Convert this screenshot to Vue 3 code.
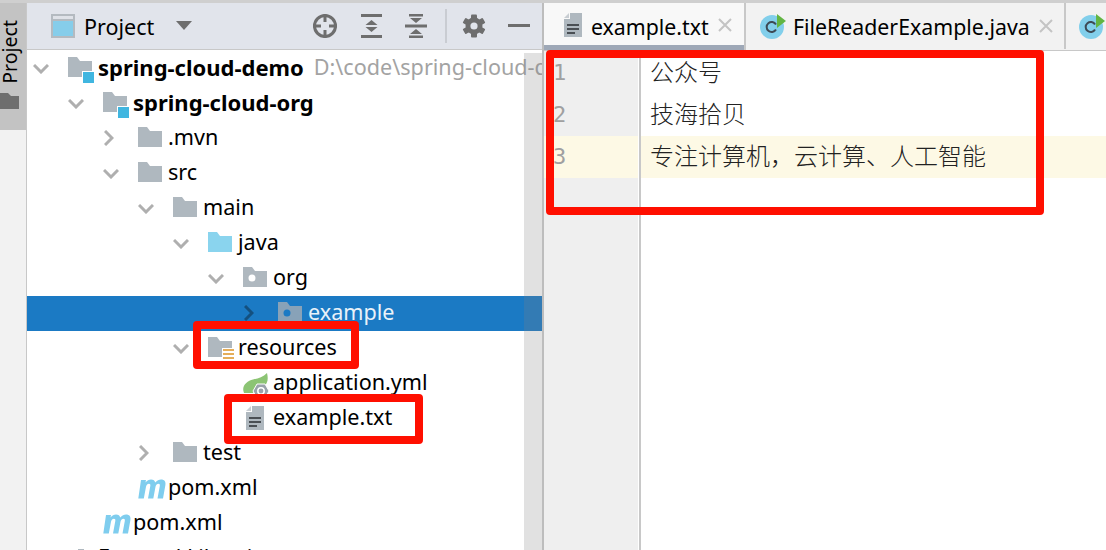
<script setup>
const rows = [
  { d: 0, c: 'down', i: 'module', t: 'spring-cloud-demo', bold: true, hint: 'D:\\code\\spring-cloud-demo' },
  { d: 1, c: 'down', i: 'module', t: 'spring-cloud-org', bold: true },
  { d: 2, c: 'right', i: 'folder', t: '.mvn' },
  { d: 2, c: 'down', i: 'folder', t: 'src' },
  { d: 3, c: 'down', i: 'folder', t: 'main' },
  { d: 4, c: 'down', i: 'source', t: 'java' },
  { d: 5, c: 'down', i: 'package', t: 'org' },
  { d: 6, c: 'right', i: 'package', t: 'example', selected: true },
  { d: 4, c: 'down', i: 'resources', t: 'resources' },
  { d: 5, c: '', i: 'spring', t: 'application.yml' },
  { d: 5, c: '', i: 'text', t: 'example.txt' },
  { d: 3, c: 'right', i: 'folder', t: 'test' },
  { d: 2, c: '', i: 'maven', t: 'pom.xml' },
  { d: 1, c: '', i: 'maven', t: 'pom.xml' },
  { d: 0, c: 'right', i: 'library', t: 'External Libraries' },
]
const lines = ['公众号', '技海拾贝', '专注计算机，云计算、人工智能']
const indent = (d) => ({ paddingLeft: 6 + 35 * d + 'px' })
</script>

<template>
  <div class="app">
    <aside class="strip">
      <div class="strip-btn">
        <span class="strip-label">Project</span>
        <svg class="strip-folder" width="19" height="16" viewBox="0 0 19 16"><path d="M-2 0H8l3 3h8v13H-2z" fill="#6e6e6e"/></svg>
      </div>
    </aside>

    <section class="panel">
      <header class="panel-head">
        <svg class="win" width="24" height="24" viewBox="0 0 24 24"><rect width="24" height="24" fill="#b4bac0"/><rect x="2" y="7" width="20" height="15" fill="#86cdea"/><rect x="2" y="2" width="20" height="3" fill="#dfe2e8"/></svg>
        <span class="panel-title">Project</span>
        <svg class="drop" width="16" height="9" viewBox="0 0 16 9"><path d="M0 0h16L8 9z" fill="#6e6e6e"/></svg>
        <svg class="act locate" width="26" height="26" viewBox="0 0 26 26" fill="none" stroke="#6e6e6e" stroke-width="3"><circle cx="13" cy="13" r="10.5"/><path d="M13 1v8M13 17v8M1 13h8M17 13h8"/></svg>
        <svg class="act expand" width="24" height="26" viewBox="0 0 24 26" fill="#6e6e6e"><rect x="1" y="1" width="21" height="3"/><rect x="1" y="22" width="21" height="3"/><path d="M11.5 7l6 5h-12zM11.5 19l-6-5h12z"/></svg>
        <svg class="act collapse" width="24" height="26" viewBox="0 0 24 26" fill="#6e6e6e"><rect x="1" y="11.5" width="22" height="3"/><rect x="5" y="1" width="14" height="2.5"/><rect x="5" y="22.5" width="14" height="2.5"/><path d="M12 10l-6-5h12zM12 16l6 5H6z"/></svg>
        <span class="sep"></span>
        <svg class="act gear" width="24" height="24" viewBox="0 0 24 24"><g fill="#6e6e6e"><rect x="9" y="0.5" width="6" height="23" rx="1"/><rect x="9" y="0.5" width="6" height="23" rx="1" transform="rotate(60 12 12)"/><rect x="9" y="0.5" width="6" height="23" rx="1" transform="rotate(120 12 12)"/><circle cx="12" cy="12" r="8.5"/></g><circle cx="12" cy="12" r="3.6" fill="#e1e4eb"/></svg>
        <span class="minus"></span>
      </header>

      <div class="tree">
        <div v-for="r in rows" :key="r.t + r.d" class="row" :class="{ selected: r.selected }" :style="indent(r.d)">
          <span class="chev">
            <svg v-if="r.c === 'down'" width="16" height="10" viewBox="0 0 16 10" fill="none" stroke="#afafaf" stroke-width="3"><path d="M1 1l7 7 7-7"/></svg>
            <svg v-else-if="r.c === 'right'" class="chev-right" width="10" height="16" viewBox="0 0 10 16" fill="none" stroke-width="3"><path d="M1 1l7 7-7 7"/></svg>
          </span>
          <span class="ico">
            <svg v-if="r.i === 'folder'" class="lift" width="24" height="20" viewBox="0 0 24 20"><path d="M0 0h9l3 4h12v16H0z" fill="#afb8bf"/></svg>
            <svg v-else-if="r.i === 'module'" class="mod" width="26" height="26" viewBox="0 0 26 26"><path d="M0 0h9l3 4h12v16H0z" fill="#afb8bf"/><rect x="14" y="14" width="12" height="12" fill="#fff"/><rect x="15" y="15" width="11" height="11" fill="#40b6e0"/></svg>
            <svg v-else-if="r.i === 'source'" class="lift" width="24" height="20" viewBox="0 0 24 20"><path d="M0 0h9l3 4h12v16H0z" fill="#8ad4ee"/></svg>
            <svg v-else-if="r.i === 'package'" class="lift" width="24" height="20" viewBox="0 0 24 20"><path class="pkg-f" d="M0 0h9l3 4h12v16H0z"/><circle class="pkg-d" cx="9" cy="11" r="3.500"/></svg>
            <svg v-else-if="r.i === 'resources'" width="27" height="24" viewBox="0 0 27 24"><path d="M0 0h9l3 4h12v16H0z" fill="#afb8bf"/><rect x="14" y="11" width="13" height="13" fill="#fff"/><path d="M15 12h11v2H15zM15 16h11v2H15zM15 20h11v2H15z" fill="#e5ae5a"/></svg>
            <svg v-else-if="r.i === 'spring'" class="spr" width="27" height="26" viewBox="0 0 27 26"><path d="M1 20C-2 13 4 8 10 6.500 15 5.500 20 4 24 0c1.500 6 .5 10-2 12H14l-4 8z" fill="#8cc474"/><path d="M10 18l4-7h8l4 7-4 7h-8z" fill="#9aa3ab" stroke="#fff" stroke-width="1"/><circle cx="18" cy="18" r="3.200" fill="none" stroke="#fff" stroke-width="1.500"/></svg>
            <svg v-else-if="r.i === 'text'" class="txt" width="20" height="26" viewBox="0 0 20 26"><path d="M7 1h12v24H1V7h6z" fill="#afb8bf"/><path d="M1 6l5-5v5z" fill="#c8cdd2"/><path d="M4 12h12v2H4zM4 16h12v2H4zM4 20h8v2H4z" fill="#4a4f54"/></svg>
            <svg v-else-if="r.i === 'maven'" width="28" height="20" viewBox="0 0 28 20"><path d="M3 1h5l-.5 2.500C9 1.500 11 .5 13 .5c2.500 0 3.800 1.200 4.200 3C19 1.500 21 .5 23 .5c3.500 0 5 2.200 4.400 5.500L25 19.500h-5.500l2.300-12.500c.3-1.500-.2-2.200-1.400-2.200-1.300 0-2.500 1-2.900 2.900L15.300 19.500H10l2.300-12.500c.3-1.500-.2-2.200-1.400-2.200-1.300 0-2.500 1-2.900 2.900L5.800 19.500H.3z" fill="#7fcdee"/></svg>
            <svg v-else-if="r.i === 'library'" width="28" height="22" viewBox="0 0 28 22"><rect x="2" y="6" width="6" height="16" fill="#afb8bf"/><rect x="10" y="1" width="6" height="21" fill="#afb8bf"/><rect x="18" y="4" width="6" height="18" fill="#8ad4ee"/></svg>
          </span>
          <span class="name" :class="{ bold: r.bold }">{{ r.t }}</span>
          <span v-if="r.hint" class="hint">{{ r.hint }}</span>
        </div>
        <div class="scroll"></div>
      </div>
    </section>

    <section class="editor">
      <nav class="tabs">
        <div class="tab active">
          <svg width="20" height="26" viewBox="0 0 20 26"><path d="M7 1h12v24H1V7h6z" fill="#afb8bf"/><path d="M1 6l5-5v5z" fill="#c8cdd2"/><path d="M4 12h12v2H4zM4 16h12v2H4zM4 20h8v2H4z" fill="#4a4f54"/></svg>
          <span class="tab-text">example.txt</span>
          <svg class="x" width="14" height="14" viewBox="0 0 14 14"><path d="M1 1l12 12M13 1L1 13" stroke="#c4c4c4" stroke-width="2"/></svg>
        </div>
        <div class="tab second">
          <svg width="28" height="26" viewBox="0 0 28 26"><circle cx="13" cy="14" r="12" fill="#82cfeb"/><path d="M17 11.500a5 5 0 1 0 0 5" fill="none" stroke="#3d4a55" stroke-width="2"/><path d="M18 1l9 7-9 7z" fill="#62b543"/></svg>
          <span class="tab-text">FileReaderExample.java</span>
          <svg class="x" width="14" height="14" viewBox="0 0 14 14"><path d="M1 1l12 12M13 1L1 13" stroke="#c4c4c4" stroke-width="2"/></svg>
        </div>
        <div class="tab third">
          <svg width="28" height="26" viewBox="0 0 28 26"><circle cx="13" cy="14" r="12" fill="#82cfeb"/><path d="M17 11.500a5 5 0 1 0 0 5" fill="none" stroke="#3d4a55" stroke-width="2"/><path d="M18 1l9 7-9 7z" fill="#62b543"/></svg>
        </div>
      </nav>
      <div class="code">
        <div class="gutter">
          <div v-for="(l, i) in lines" :key="i" class="num" :class="{ current: i === 2 }">{{ i + 1 }}</div>
        </div>
        <div class="content">
          <div v-for="(l, i) in lines" :key="i" class="line" :class="{ current: i === 2 }">{{ l }}</div>
        </div>
      </div>
    </section>

    <div class="mark mark-code"></div>
    <div class="mark mark-res"></div>
    <div class="mark mark-file"></div>
  </div>
</template>

<style scoped>
.app {
  position: relative;
  display: flex;
  width: 1106px;
  height: 550px;
  overflow: hidden;
  box-sizing: border-box;
  border-top: 3px solid #cfcfcf;
  background: #fff;
  font-family: "Noto Sans", "Liberation Sans", sans-serif;
  color: #000;
}
.strip {
  flex: 0 0 27px;
  box-sizing: border-box;
  min-width: 0;
  overflow: hidden;
  background: #f2f2f2;
  border-right: 1px solid #c8c8c8;
}
.strip-btn {
  position: relative;
  height: 127px;
  background: #c3c3c3;
  display: flex;
  flex-direction: column;
  align-items: center;
}
.strip-label {
  writing-mode: vertical-rl;
  transform: rotate(180deg);
  font-size: 19.500px;
  line-height: 20px;
  margin: 17px 6px 0 0;
}
.strip-folder {
  margin: 9px 7px 0 0;
}
.panel {
  flex: 0 0 515px;
  display: flex;
  flex-direction: column;
  min-width: 0;
}
.panel-head {
  flex: 0 0 47px;
  box-sizing: border-box;
  display: flex;
  align-items: center;
  padding: 0 0 1px 24px;
  background: #e1e4eb;
  border-bottom: 1px solid #c8c8c8;
}
.panel-title {
  font-size: 21.500px;
  margin-left: 9px;
  width: 92px;
  padding-top: 2px;
}
.drop { margin-right: 120px; }
.act { flex: none; }
.expand { margin-left: 22px; }
.collapse { margin-left: 20px; }
.sep {
  width: 2px;
  height: 34px;
  background: #c9ccd2;
  margin: 0 15px 0 17px;
}
.minus {
  width: 22px;
  height: 3px;
  background: #6e6e6e;
  margin-left: 22px;
}
.tree {
  position: relative;
  flex: 1;
  overflow: hidden;
  padding-top: 1px;
}
.row {
  display: flex;
  align-items: center;
  height: 35px;
  box-sizing: border-box;
  white-space: nowrap;
  font-size: 21.600px;
}
.row.selected {
  background: #1b7ac4;
  color: #e9f2f9;
}
.chev {
  flex: 0 0 35px;
  display: flex;
  align-items: center;
}
.chev-right { margin: 0 0 2px 1px; stroke: #afafaf; }
.selected .chev-right { stroke: #14507f; }
.ico {
  flex: 0 0 30px;
  display: flex;
  align-items: center;
}
.lift { margin-bottom: 3px; }
.mod { margin-top: 3px; }
.spr { margin-top: 5px; }
.txt { margin: 0 0 2px 2px; }
.pkg-f { fill: #afb8bf; }
.pkg-d { fill: #fff; }
.selected .pkg-f { fill: #88a2b8; }
.selected .pkg-d { fill: #1b7ac4; }
.name, .hint { padding-bottom: 4px; }
.bold { font-weight: 700; font-size: 22px; }
.hint {
  color: #a3a3a3;
  margin-left: 10px;
}
.scroll {
  position: absolute;
  top: 3px;
  right: 0;
  bottom: 0;
  width: 18px;
  background: rgba(128, 128, 128, 0.24);
}
.editor {
  flex: 1;
  min-width: 0;
  display: flex;
  flex-direction: column;
  border-left: 2px solid #bdbdbd;
}
.tabs {
  flex: 0 0 47px;
  box-sizing: border-box;
  display: flex;
  background: #f2f2f2;
  border-bottom: 1px solid #c8c8c8;
}
.tab {
  display: flex;
  align-items: center;
  box-sizing: border-box;
  height: 46px;
  border-right: 2px solid #c8c8c8;
}
.tab.active {
  flex: 0 0 202px;
  padding: 0 0 4px 19px;
  background: #f8f8f8;
  box-shadow: inset 0 -5px 0 #9ea8b7;
  height: 47px;
}
.second {
  flex: 0 0 320px;
  padding-left: 13px;
}
.third {
  flex: 1;
  padding-left: 12px;
  border-right: 0;
}
.tab-text {
  font-size: 21.300px;
  margin-left: 8px;
  white-space: nowrap;
  padding-top: 1px;
}
.active .tab-text { padding-top: 3px; }
.second .tab-text { margin-left: 6px; }
.x { margin-left: 9px; flex: none; }
.code {
  flex: 1;
  display: flex;
}
.gutter {
  flex: 0 0 97px;
  box-sizing: border-box;
  padding-top: 1px;
  background: #efefef;
  box-shadow: inset -1px 0 0 #fff;
  border-right: 2px solid #c8c8c8;
}
.num {
  height: 42px;
  line-height: 42px;
  padding-left: 9px;
  font-family: "DejaVu Sans Mono", monospace;
  font-size: 22px;
  color: #a0a0a0;
  margin-right: 1px;
}
.num.current { background: #fdf9e5; }
.content {
  flex: 1;
  padding-top: 1px;
}
.line {
  height: 42px;
  line-height: 38px;
  padding-left: 9px;
  font-family: "Noto Sans CJK SC", sans-serif;
  font-size: 24px;
  font-weight: 300;
  color: #222;
  white-space: nowrap;
}
.line.current { background: #fdf9e5; }
.mark {
  position: absolute;
  box-sizing: border-box;
  border: 8px solid #ff0f00;
  border-radius: 4px;
}
.mark-code { left: 546px; top: 47px; width: 498px; height: 165px; }
.mark-res { left: 193px; top: 318px; width: 166px; height: 48px; }
.mark-file { left: 224px; top: 391px; width: 199px; height: 50px; }
</style>
